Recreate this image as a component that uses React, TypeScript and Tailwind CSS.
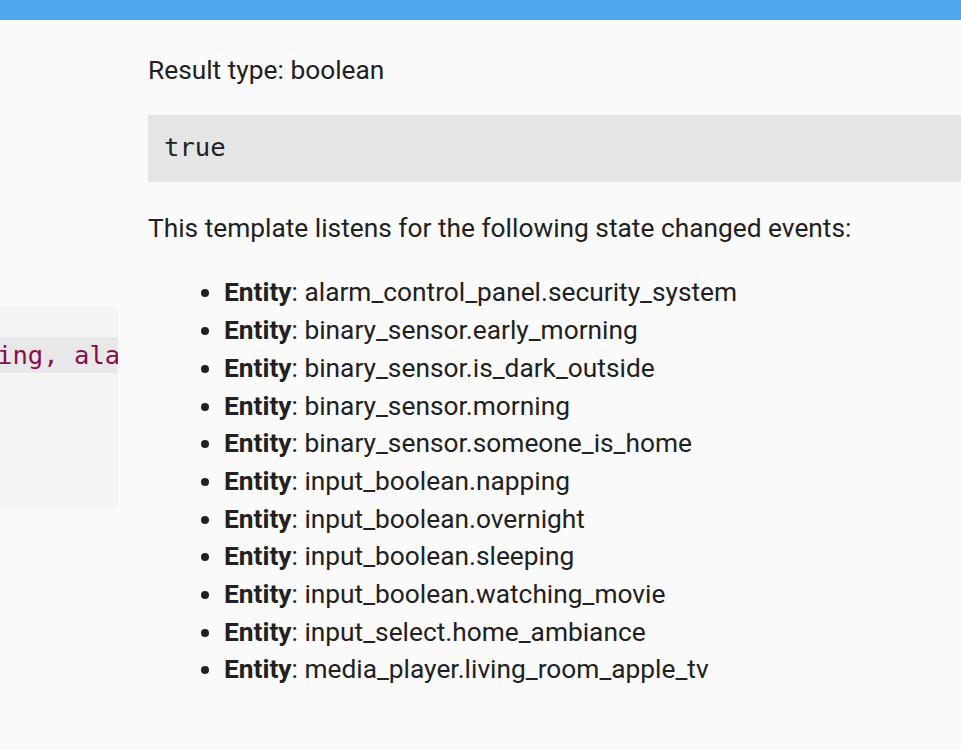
import React from "react";

const entities = [
  "alarm_control_panel.security_system",
  "binary_sensor.early_morning",
  "binary_sensor.is_dark_outside",
  "binary_sensor.morning",
  "binary_sensor.someone_is_home",
  "input_boolean.napping",
  "input_boolean.overnight",
  "input_boolean.sleeping",
  "input_boolean.watching_movie",
  "input_select.home_ambiance",
  "media_player.living_room_apple_tv",
];

export default function App() {
  return (
    <div
      className="w-[961px] h-[750px] overflow-hidden bg-[#fafafa] text-[#212121]"
      style={{ fontFamily: "Roboto, 'Noto Sans', sans-serif" }}
    >
      <div className="h-[20px] bg-[#51a7ed]" />
      <div className="flex gap-[30px]">
        <div className="w-[118px] shrink-0 pt-[287px]">
          <div className="h-[203px] bg-[#f5f5f5] rounded-tr-[8px] rounded-br-[8px] overflow-hidden pt-[30px]">
            <div
              className="h-[36px] bg-[#e8e8e8] text-[25.6px] leading-[36px] text-[#880e4f] whitespace-pre overflow-hidden"
              style={{ fontFamily: "'DejaVu Sans Mono', monospace" }}
            >
              <span className="ml-[-3px]">ing, ala</span>
            </div>
          </div>
        </div>
        <div className="flex-1 min-w-0 pt-[32px] text-[26.3px] leading-[37.7px]">
          <p>Result type: boolean</p>
          <pre
            className="mt-[25px] w-[900px] h-[67px] bg-[#e5e5e5] px-[16px] flex items-center text-[25.6px] text-[#212121]"
            style={{ fontFamily: "'DejaVu Sans Mono', monospace" }}
          >
            true
          </pre>
          <p className="mt-[28px]">This template listens for the following state changed events:</p>
          <ul className="mt-[27px] list-disc pl-[76px]">
            {entities.map((e) => (
              <li key={e}>
                <b className="font-bold">Entity</b>: {e}
              </li>
            ))}
          </ul>
        </div>
      </div>
    </div>
  );
}
